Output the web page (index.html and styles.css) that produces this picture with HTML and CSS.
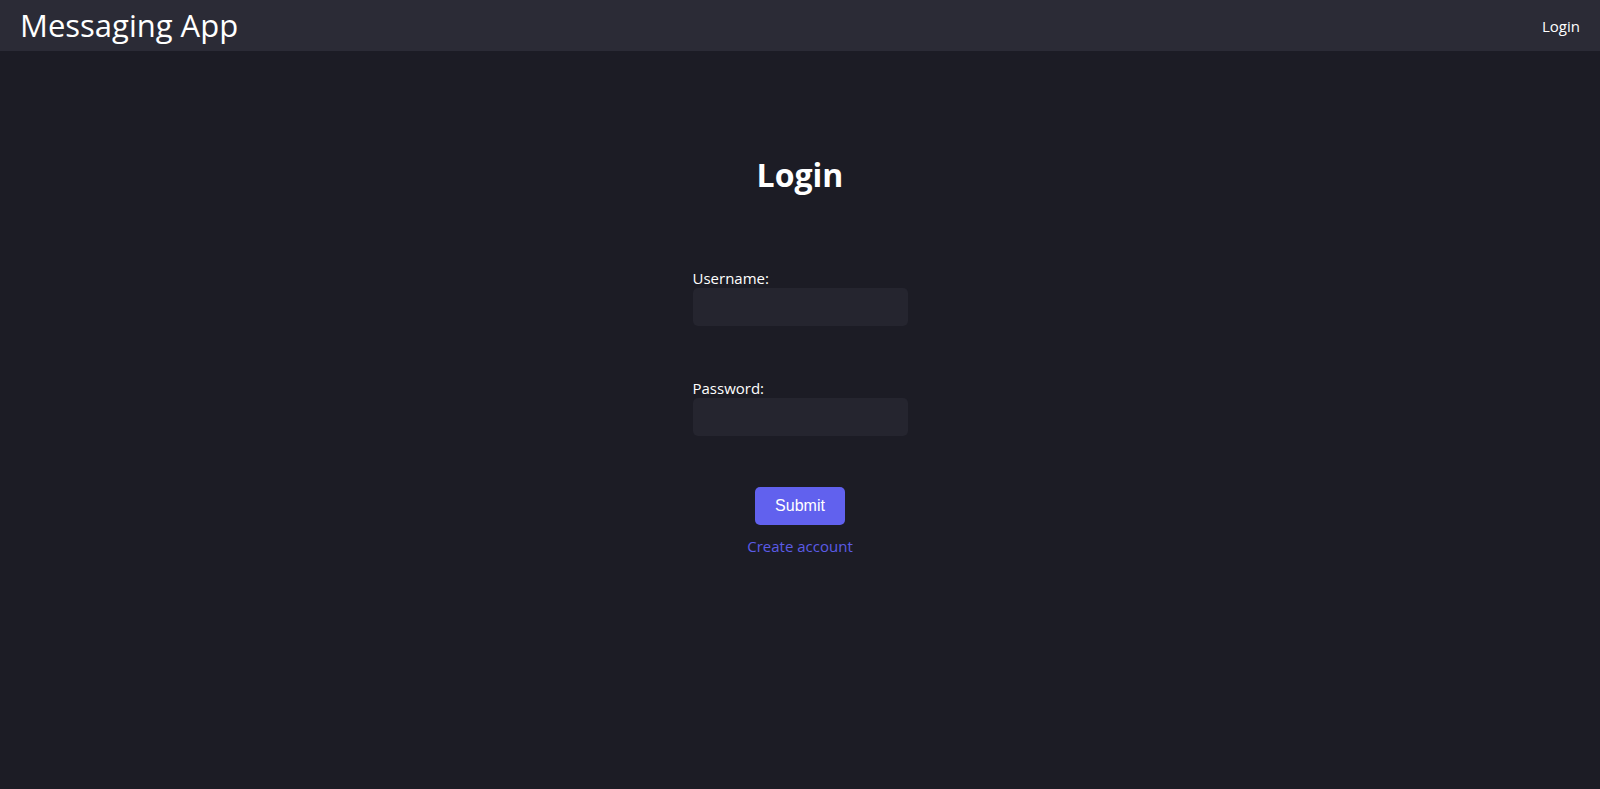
FILE: index.html
```html
<!DOCTYPE html>
<html lang="en">
<head>
  <meta charset="UTF-8">
  <title>Messaging App</title>
  <link rel="stylesheet" href="styles.css">
</head>
<body>

  <header class="topbar">
    <a class="brand" href="#">Messaging App</a>
    <nav>
      <a class="nav-link" href="#">Login</a>
    </nav>
  </header>

  <main class="page">
    <h1>Login</h1>

    <form class="login-form">
      <div class="field">
        <label for="username">Username:</label>
        <input type="text" id="username" name="username">
      </div>

      <div class="field">
        <label for="password">Password:</label>
        <input type="password" id="password" name="password">
      </div>

      <button type="submit">Submit</button>
      <a class="create-link" href="#">Create account</a>
    </form>
  </main>

</body>
</html>
```

FILE: styles.css
```css
body {
  background-color: #1c1c25;
  color: white;
  font-family: "Open Sans", "Noto Sans", sans-serif;
  margin: 0;
}

.topbar {
  background-color: #2b2b36;
  height: 51px;
  padding: 0 20px;
  display: flex;
  align-items: center;
  justify-content: space-between;
}

.brand {
  color: white;
  text-decoration: none;
  font-size: 31px;
  line-height: 51px;
}

.nav-link {
  color: white;
  text-decoration: none;
  font-size: 15px;
}

.page {
  display: flex;
  flex-direction: column;
  align-items: center;
}

h1 {
  font-size: 32px;
  font-weight: bold;
  line-height: 44px;
  margin: 102px 0 0;
}

.login-form {
  display: flex;
  flex-direction: column;
  align-items: center;
  margin-top: 71px;
}

.field {
  width: 215px;
  margin-bottom: 52px;
}

.field label {
  display: block;
  font-size: 15px;
  line-height: 20px;
}

.field input {
  display: block;
  box-sizing: border-box;
  width: 100%;
  height: 38px;
  background-color: #25252f;
  border: none;
  border-radius: 5px;
  color: white;
  padding: 0 10px;
  outline: none;
}

.field:last-of-type {
  margin-bottom: 51px;
}

button {
  background-color: #6161ee;
  color: white;
  border: none;
  border-radius: 5px;
  width: 90px;
  height: 38px;
  font-family: "Liberation Sans", Arial, sans-serif;
  font-size: 16px;
  cursor: pointer;
}

.create-link {
  color: #5b5be6;
  text-decoration: none;
  font-size: 15px;
  line-height: 20px;
  margin-top: 11px;
}
```
